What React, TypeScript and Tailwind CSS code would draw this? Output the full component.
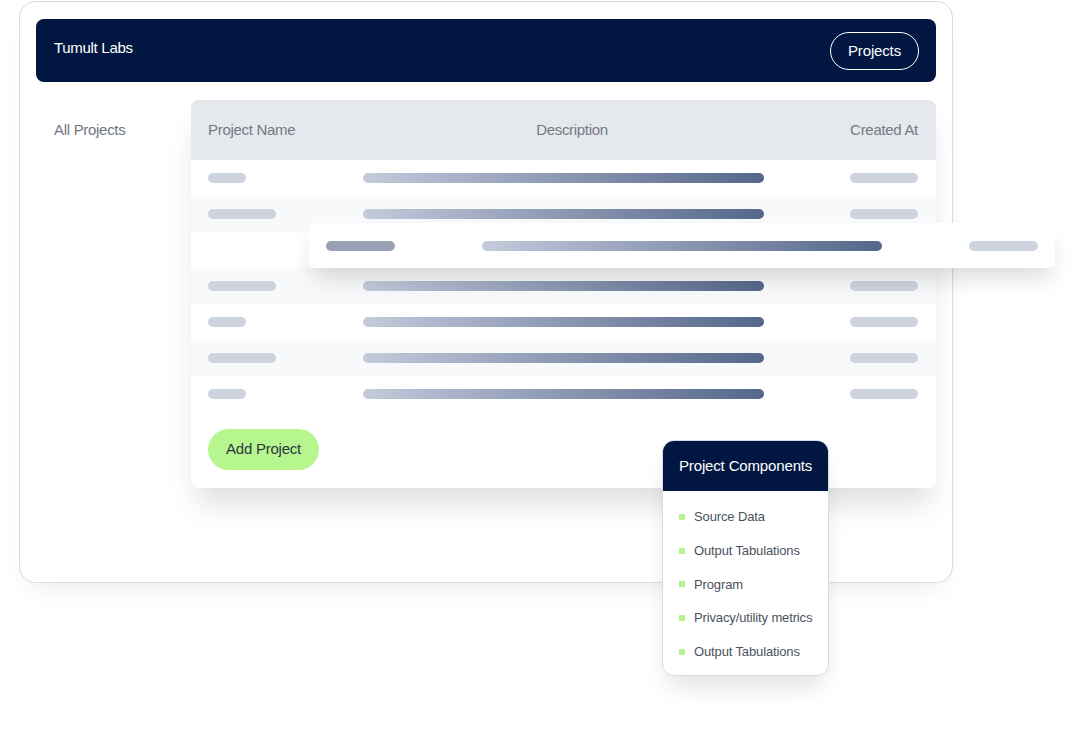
import React from 'react'

const rows = [
  { name: 38, stripe: false },
  { name: 68, stripe: true },
  { name: 0, stripe: false },
  { name: 68, stripe: true },
  { name: 38, stripe: false },
  { name: 68, stripe: true },
  { name: 38, stripe: false },
]

const components = ['Source Data', 'Output Tabulations', 'Program', 'Privacy/utility metrics', 'Output Tabulations']

function DescBar({ width = 'w-[401px]' }: { width?: string }) {
  return <div className={`${width} h-[10px] rounded-full bg-gradient-to-r from-[#c3cbdb] to-[#56678a]`} />
}

export default function App() {
  return (
    <div
      className="relative w-[1080px] h-[729px] bg-white overflow-hidden pt-[1px] pl-[19px]"
      style={{ fontFamily: '"Liberation Sans", Arial, sans-serif' }}
    >
      {/* Outer window */}
      <div className="w-[934px] h-[582px] rounded-[16px] border border-[#d5dcea] bg-white pt-[17px] px-[16px] shadow-[0_14px_24px_-10px_rgba(0,0,0,0.08)]">
        <header className="h-[63px] rounded-[8px] bg-[#011741] flex items-center justify-between pl-[18px] pr-[17px]">
          <span className="text-white text-[15px] tracking-[-0.02em] -mt-[4px]">Tumult Labs</span>
          <button className="h-[38px] px-[17px] rounded-full border border-white text-white text-[15px] tracking-[-0.01em] mt-[1px]">
            Projects
          </button>
        </header>

        <div className="flex mt-[18px]">
          <div className="w-[155px] pl-[18px] h-[60px] flex items-center text-[15px] tracking-[-0.02em] text-[#6f7580]">
            All Projects
          </div>

          <div className="w-[745px] rounded-[8px] bg-white overflow-hidden shadow-[0_22px_30px_-6px_rgba(0,0,0,0.13)]">
            <div className="h-[60px] bg-[#e5e8ec] flex items-center pl-[17px] pr-[18px] text-[15px] tracking-[-0.02em] text-[#737984]">
              <div className="w-[155px]">Project Name</div>
              <div className="w-[401px] text-center pl-[17px]">Description</div>
              <div className="flex-1 text-right">Created At</div>
            </div>
            {rows.map((r, i) => (
              <div
                key={i}
                className={`h-[36px] flex items-center pl-[17px] pr-[18px] ${r.stripe ? 'bg-[#f8f9fa]' : 'bg-white'}`}
              >
                <div className="w-[155px]">
                  {r.name > 0 && <div className="h-[10px] rounded-full bg-[#cdd3df]" style={{ width: r.name }} />}
                </div>
                <DescBar />
                <div className="flex-1 flex justify-end">
                  <div className="w-[68px] h-[10px] rounded-full bg-[#cdd3df]" />
                </div>
              </div>
            ))}
            <div className="pt-[17px] pb-[18px] pl-[17px]">
              <button className="h-[41px] px-[18px] rounded-full bg-[#b7f68f] text-[#2c3540] text-[15px] tracking-[-0.015em]">
                Add Project
              </button>
            </div>
          </div>
        </div>
      </div>

      {/* Floating highlighted row */}
      <div className="absolute left-[309px] top-[223px] w-[746px] h-[45px] rounded-[6px] bg-white flex items-center pl-[17px] pr-[17px] shadow-[0_14px_22px_-4px_rgba(0,0,0,0.14)]">
        <div className="w-[156px]">
          <div className="w-[69px] h-[10px] rounded-full bg-[#98a1b4]" />
        </div>
        <DescBar width="w-[400px]" />
        <div className="flex-1 flex justify-end">
          <div className="w-[69px] h-[10px] rounded-full bg-[#cdd3df]" />
        </div>
      </div>

      {/* Project components card */}
      <div className="absolute left-[662px] top-[440px] w-[167px] rounded-[12px] bg-white border border-[#d5dcea] overflow-hidden shadow-[0_16px_24px_-6px_rgba(0,0,0,0.12)]">
        <div className="h-[50px] bg-[#011741] flex items-center pl-[16px] text-white text-[15px] tracking-[-0.01em]">
          Project Components
        </div>
        <ul className="pt-[9px] pb-[6px]">
          {components.map((c, i) => (
            <li key={i} className="h-[33.75px] flex items-center pl-[16px] gap-[9px] text-[13px] tracking-[-0.01em] text-[#4a525d]">
              <span className="w-[6px] h-[6px] bg-[#b6f48e]" />
              {c}
            </li>
          ))}
        </ul>
      </div>
    </div>
  )
}
